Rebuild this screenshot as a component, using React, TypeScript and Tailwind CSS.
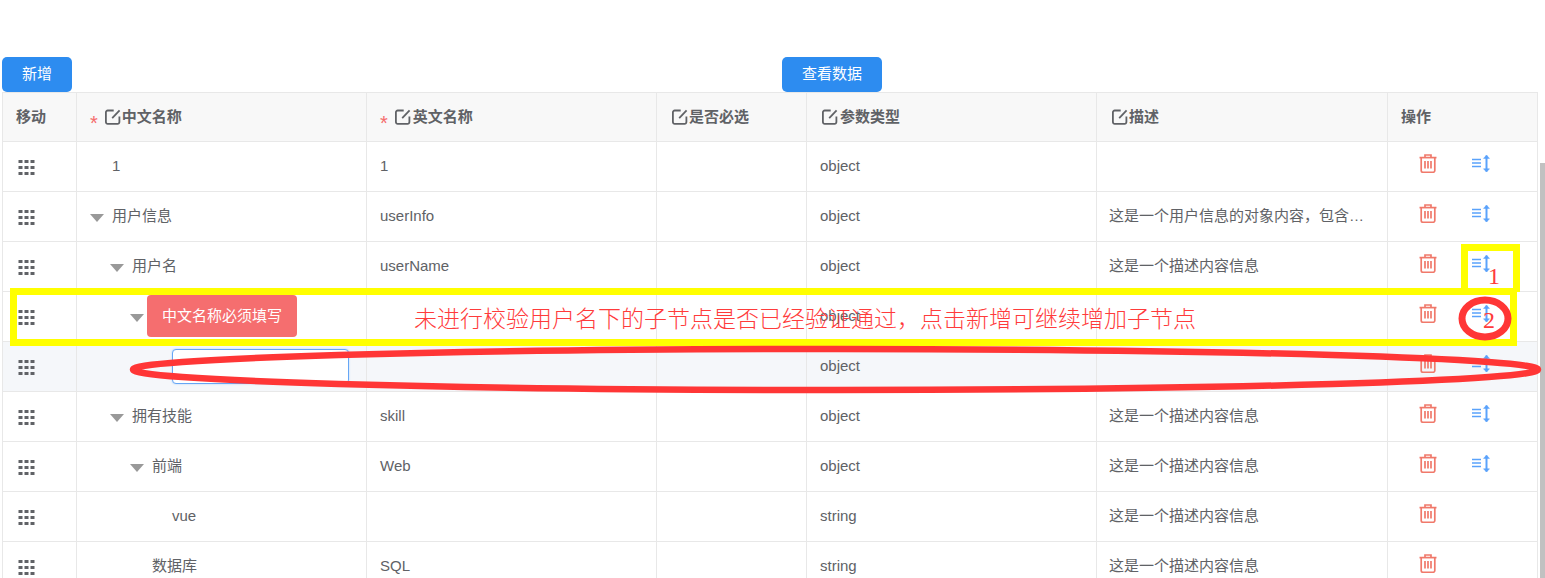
import React from "react";

const cols = "grid grid-cols-[74px_290px_290px_150px_290px_291px_150px]";
const cell = "border-r border-b border-[#e8e8e8] flex items-center h-[50px] min-w-0";

function Edit() {
  return (
    <svg width="16" height="16" viewBox="0 0 16 16" fill="none" stroke="#606266" strokeWidth="1.8" className="shrink-0">
      <path d="M14.4 7.5v5.6a1.8 1.8 0 0 1-1.8 1.8H2.7a1.8 1.8 0 0 1-1.8-1.8V3.3a1.8 1.8 0 0 1 1.8-1.8h6" />
      <path d="M14.6 1.4 7.2 9.2" />
    </svg>
  );
}

function Drag() {
  return (
    <svg width="17" height="15" viewBox="0 0 17 15" fill="#606266">
      {[0, 6, 12].map((x) =>
        [0, 6, 12].map((y) => <rect key={`${x}-${y}`} x={x + 0.5} y={y} width="4" height="3" />)
      )}
    </svg>
  );
}

function Trash() {
  return (
    <svg width="18" height="19" viewBox="0 0 18 19" fill="none" stroke="#f0796b" strokeWidth="1.7">
      <path d="M0.5 3.6h17" />
      <path d="M6 3.4V1h6v2.4" />
      <path d="M2.2 3.8v12.7a1.8 1.8 0 0 0 1.8 1.8h10a1.8 1.8 0 0 0 1.8-1.8V3.8" />
      <path d="M6 7v7.5M9 7v7.5M12 7v7.5" />
    </svg>
  );
}

function Sort() {
  return (
    <svg width="18" height="19" viewBox="0 0 18 19" fill="none" stroke="#5aa2fb" strokeWidth="1.7">
      <path d="M0 5.5h9M0 9h9M0 12.5h9" />
      <path d="M14.5 1.5v16" strokeWidth="2" />
      <path d="M11.5 4.4l3-3.2 3 3.2zM11.5 14.8l3 3.2 3-3.2z" fill="#5aa2fb" strokeWidth="0.5" />
    </svg>
  );
}

function Caret() {
  return <span className="w-0 h-0 border-x-[7px] border-x-transparent border-t-[8px] border-t-[#999] shrink-0 mt-[3px] mr-[8px]" />;
}

type Row = { name: string; en: string; type: string; desc: string; indent: number; caret: boolean; sort: boolean };
const rows: Row[] = [
  { name: "1", en: "1", type: "object", desc: "", indent: 33, caret: false, sort: true },
  { name: "用户信息", en: "userInfo", type: "object", desc: "这是一个用户信息的对象内容，包含用户名、密码等", indent: 13, caret: true, sort: true },
  { name: "用户名", en: "userName", type: "object", desc: "这是一个描述内容信息", indent: 33, caret: true, sort: true },
  { name: "", en: "", type: "object", desc: "", indent: 53, caret: true, sort: true },
  { name: "", en: "", type: "object", desc: "", indent: 95, caret: false, sort: true },
  { name: "拥有技能", en: "skill", type: "object", desc: "这是一个描述内容信息", indent: 33, caret: true, sort: true },
  { name: "前端", en: "Web", type: "object", desc: "这是一个描述内容信息", indent: 53, caret: true, sort: true },
  { name: "vue", en: "", type: "string", desc: "这是一个描述内容信息", indent: 95, caret: false, sort: false },
  { name: "数据库", en: "SQL", type: "string", desc: "这是一个描述内容信息", indent: 75, caret: false, sort: false },
];

function Head({ label, required, edit = true, pl, gap = "ml-[1px]" }: { label: string; required?: boolean; edit?: boolean; pl: string; gap?: string }) {
  return (
    <div className={`border-r border-b border-[#e8e8e8] h-[49px] flex items-center font-bold text-[15px] text-[#606266] ${pl}`}>
      {required && <span className="text-[#f56c6c] text-[20px] leading-none mr-[7px] mt-[12px] font-normal">*</span>}
      {edit && <Edit />}
      <span className={gap}>{label}</span>
    </div>
  );
}

export default function App() {
  return (
    <div
      className="relative w-[1545px] h-[578px] overflow-hidden bg-white text-[15px] text-[#606266]"
      style={{ fontFamily: '"Liberation Sans", "Noto Sans CJK SC", sans-serif' }}
    >
      <div className="pt-[57px] pl-[2px] flex h-[92px]">
        <button className="w-[70px] h-[35px] rounded-[5px] bg-[#2d8cf0] text-white text-[15px]">新增</button>
        <button className="ml-[710px] w-[100px] h-[35px] rounded-[5px] bg-[#2d8cf0] text-white text-[15px]">查看数据</button>
      </div>

      <div className="ml-[2px] w-[1536px] border-l border-t border-[#e8e8e8]">
        <div className={`${cols} bg-[#f8f8f8]`}>
          <Head label="移动" edit={false} pl="pl-[12px]" />
          <Head label="中文名称" required pl="pl-[13px]" />
          <Head label="英文名称" required pl="pl-[13px]" gap="ml-[2px]" />
          <Head label="是否必选" pl="pl-[15px]" />
          <Head label="参数类型" pl="pl-[15px]" gap="ml-[2px]" />
          <Head label="描述" pl="pl-[15px]" />
          <Head label="操作" edit={false} pl="pl-[12px]" />
        </div>
        {rows.map((r, i) => (
          <div key={i} className={`${cols} ${i === 4 ? "bg-[#f5f7fa]" : ""}`}>
            <div className={`${cell} pl-[15px] pt-[2px]`}>
              <Drag />
            </div>
            <div className={`${cell}`} style={{ paddingLeft: r.indent }}>
              {r.caret && <Caret />}
              {i === 4 ? (
                <div className="w-[177px] h-[35px] bg-white border border-[#66a6f5] rounded-[4px] shadow-[0_0_2px_#a9cdf9]" />
              ) : (
                <span className={r.name === "1" ? "ml-[2px]" : ""}>{r.name}</span>
              )}
            </div>
            <div className={`${cell} pl-[13px]`}>{r.en}</div>
            <div className={cell} />
            <div className={`${cell} pl-[13px]`}>{r.type}</div>
            <div className={`${cell} pl-[12px] pr-[20px]`}>
              <span className="truncate">{r.desc}</span>
            </div>
            <div className={`${cell} pl-[31px] gap-[35px] pb-[6px]`}>
              <Trash />
              {r.sort && <Sort />}
            </div>
          </div>
        ))}
      </div>

      <div className="absolute right-0 top-[163px] bottom-0 w-[5px] bg-[#c1c1c1]" />

      {/* 标注层 */}
      <svg className="absolute inset-0 pointer-events-none" width="1545" height="578" fill="none">
        <path d="M1464.5 288V247.5H1516.5V292" stroke="#ffff00" strokeWidth="7" />
        <rect x="13.5" y="291.5" width="1500" height="51" stroke="#ffff00" strokeWidth="7" />
        <ellipse cx="835.5" cy="369.5" rx="702.5" ry="20.5" stroke="#ff3636" strokeWidth="6.5" />
        <ellipse cx="1485" cy="318.5" rx="23" ry="18.5" stroke="#ff3636" strokeWidth="7" />
      </svg>

      <div className="absolute left-[147px] top-[295px] w-[150px] h-[42px] rounded-[4px] bg-[#f56e6f] text-white text-[15px] flex items-center justify-center">
        中文名称必须填写
      </div>
      <div className="absolute left-[414px] top-[303px] text-[23px] leading-[32px] text-[#ff3b3b] whitespace-nowrap font-light">
        未进行校验用户名下的子节点是否已经验证通过，点击新增可继续增加子节点
      </div>
      <div className="absolute left-[1488px] top-[262px] text-[24px] leading-[28px] text-[#ff3b3b]" style={{ fontFamily: '"Liberation Serif", serif' }}>1</div>
      <div className="absolute left-[1483px] top-[306px] text-[24px] leading-[28px] text-[#ff3b3b]" style={{ fontFamily: '"Liberation Serif", serif' }}>2</div>
    </div>
  );
}
